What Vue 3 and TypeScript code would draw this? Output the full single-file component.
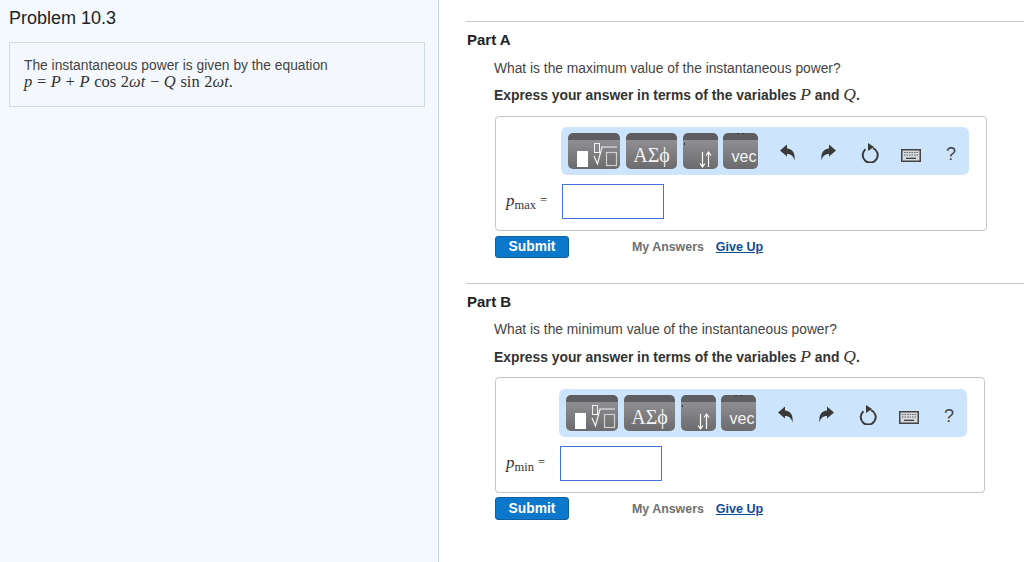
<script setup lang="ts">
interface Part {
  name: string
  question: string
  sub: string
}
const parts: Part[] = [
  { name: 'Part A', question: 'What is the maximum value of the instantaneous power?', sub: 'max' },
  { name: 'Part B', question: 'What is the minimum value of the instantaneous power?', sub: 'min' },
]
</script>

<template>
  <div class="page">
    <aside class="left">
      <h1 class="title">Problem 10.3</h1>
      <div class="intro">
        <div>The instantaneous power is given by the equation</div>
        <div class="math eq"><i>p</i> = <i>P</i> + <i>P</i> cos 2<i>ωt</i> − <i>Q</i> sin 2<i>ωt</i>.</div>
      </div>
    </aside>
    <main class="right">
      <section v-for="(p, idx) in parts" :key="p.name" class="part" :class="{ second: idx === 1 }">
        <h2 class="part-name">{{ p.name }}</h2>
        <div class="body">
          <p class="question">{{ p.question }}</p>
          <p class="express">Express your answer in terms of the variables <i class="math big">P</i> and <i class="math big">Q</i>.</p>
          <div class="box">
            <div class="toolbar">
              <div class="tool t1">
                <svg width="52" height="29" viewBox="0 0 52 29">
                  <rect x="9" y="11" width="11" height="16" fill="#fff" />
                  <rect x="26.500" y="3.500" width="5" height="9" fill="none" stroke="#f0f0f0" />
                  <path d="M26 16l3.500 8 4.500-17h15" fill="none" stroke="#f4f4f4" stroke-width="1.200" />
                  <rect x="38.500" y="12.500" width="10" height="13" fill="none" stroke="#d0d0d0" stroke-width="1.200" />
                </svg>
              </div>
              <div class="tool t2"><span class="greek">ΑΣϕ</span></div>
              <div class="tool t3">
                <svg width="35" height="29" viewBox="0 0 35 29">
                  <path d="M19.500 12v15M17 23.500l2.500 3.500 2.500-3.500M25.500 27V12M23 15.500l2.500-3.500 2.500 3.500" fill="none" stroke="#fff" stroke-width="1.200" />
                </svg>
              </div>
              <div class="tool t4"><span class="vec">vec</span></div>
              <div class="actions">
                <svg class="a1" width="15" height="17" viewBox="0 0 15 17">
                  <path d="M0 6.500L7 .5v4c5 .2 8.500 4 7.500 12-1-4-3-6.500-7.500-6.500v2.500z" fill="#3a3a3a" />
                </svg>
                <svg class="a2" width="15" height="17" viewBox="0 0 15 17">
                  <path d="M15 6.500L8 .5v4c-5 .2-8.500 4-7.500 12 1-4 3-6.500 7.500-6.500v2.500z" fill="#3a3a3a" />
                </svg>
                <svg class="a3" width="18" height="20" viewBox="0 0 18 20">
                  <path d="M4.500 6.200A7.500 7.500 0 1 0 12 5.100" fill="none" stroke="#3a3a3a" stroke-width="2" />
                  <path d="M7 0l6 4-6 4z" fill="#3a3a3a" />
                </svg>
                <svg class="a4" width="20" height="13" viewBox="0 0 20 13">
                  <rect x=".75" y=".75" width="18.500" height="11.500" fill="#d6d8dc" stroke="#444" stroke-width="1.500" />
                  <path d="M3 3.500h14M3 6h14" stroke="#666" stroke-dasharray="1.500 1" />
                  <path d="M5 9.300h10" stroke="#333" stroke-width="1.200" />
                </svg>
                <span class="help">?</span>
              </div>
            </div>
            <div class="answer-row">
              <span class="label math"><i>p</i><sub>{{ p.sub }}</sub><span class="equals">=</span></span>
              <input class="answer" type="text" />
            </div>
          </div>
          <div class="controls">
            <button class="submit" type="button">Submit</button>
            <span class="my">My Answers</span>
            <a class="give" href="#">Give Up</a>
          </div>
        </div>
      </section>
    </main>
  </div>
</template>

<style>
html, body { margin: 0; background: #fff; overflow: hidden; }
</style>

<style scoped>
.page {
  display: flex;
  width: 1024px;
  height: 562px;
  overflow: hidden;
  font-family: "Liberation Sans", Arial, sans-serif;
  color: #333;
}
.left {
  box-sizing: border-box;
  width: 439px;
  height: 562px;
  padding: 9px 13px 0 9px;
  background: #f4f8ff;
  border-right: 1px solid #c8d8e6;
}
.title {
  margin: 0 0 14px;
  font-size: 18px;
  line-height: 19px;
  font-weight: 400;
  color: #222;
}
.intro {
  box-sizing: border-box;
  height: 65px;
  padding: 15px 14px 0;
  background: #f4f8fd;
  border: 1px solid #cfdcea;
  font-size: 13.800px;
  line-height: 16px;
  color: #444;
}
.math { font-family: "Liberation Serif", "Times New Roman", serif; }
.eq { margin-top: -1px; font-size: 16.500px; line-height: 17px; color: #333; word-spacing: .5px; }
.right {
  flex: 1;
  min-width: 0;
  padding: 21px 0 0 27px;
}
.part {
  border-top: 1px solid #c8c8c8;
  height: 262px;
  box-sizing: border-box;
}
.part-name {
  margin: 9px 0 0;
  padding-left: 1px;
  font-size: 15px;
  line-height: 18px;
  font-weight: 700;
  color: #222;
}
.body {
  padding-left: 28px;
}
.question {
  margin: 12px 0 0;
  font-size: 13.800px;
  line-height: 16px;
  color: #444;
}
.second .question { margin-top: 11px; }
.express {
  margin: 10px 0 0;
  font-size: 13.850px;
  line-height: 16px;
  font-weight: 700;
  color: #333;
}
.second .express { margin-top: 11px; }
.big { font-size: 17.500px; font-weight: 400; line-height: 14px; }
.box {
  box-sizing: border-box;
  width: 492px;
  height: 115px;
  margin: 13px 0 0 1px;
  padding: 10px 0 0 65px;
  background: #fff;
  border: 1px solid #c4c4c4;
  border-radius: 4px;
}
.second .box { margin-top: 12px; height: 116px; width: 490px; padding-left: 63px; }
.second .toolbar { margin-top: 1px; }
.toolbar {
  display: flex;
  align-items: center;
  box-sizing: border-box;
  width: 408px;
  height: 48px;
  padding-left: 7px;
  gap: 6px;
  background: #cde4fd;
  border-radius: 6px;
}
.tool {
  position: relative;
  display: flex;
  align-items: flex-end;
  justify-content: center;
  box-sizing: border-box;
  height: 36px;
  border-radius: 5px;
  border-top: 7px solid #5e5d5f;
  background: linear-gradient(#908e92, #6b6a6c);
  color: #fff;
}
.tool svg { display: block; }
.t1 { width: 52px; }
.t2 { width: 51px; }
.t3 { width: 35px; }
.t3::before {
  content: "";
  position: absolute;
  left: 1px;
  top: 3px;
  width: 1px;
  height: 2px;
  background: #333;
}
.t4 { width: 35px; margin-left: -1px; }
.t4::before {
  content: "";
  position: absolute;
  left: 14px;
  top: -7px;
  width: 2px;
  height: 1px;
  background: #333;
  box-shadow: 5px 0 #333;
}
.greek {
  font-family: "Liberation Serif", serif;
  font-size: 20px;
  line-height: 28px;
  color: #f4f4f4;
}
.vec { font-size: 16px; line-height: 24px; padding-left: 7px; color: #f4f4f4; white-space: nowrap; }
.actions {
  display: flex;
  align-items: center;
  flex: 1;
  height: 100%;
  padding-left: 16px;
  box-sizing: border-box;
}
.actions svg { flex: none; }
.a1 { margin-top: 3px; }
.a2 { margin-left: 26px; margin-top: 3px; }
.a3 { margin-left: 25px; margin-top: 4px; }
.a4 { margin-left: 22px; margin-top: 9px; }
.help { margin-left: 25px; font-size: 18px; color: #444; margin-top: 7px; }
.answer-row {
  display: flex;
  align-items: center;
  margin-top: 9px;
  margin-left: -56px;
}
.label {
  box-sizing: border-box;
  width: 57px;
  padding-left: 1px;
  font-size: 15px;
  color: #333;
  line-height: 35px;
  white-space: nowrap;
  margin-top: -1px;
}
.second .label { padding-left: 3px; }
.label i { font-size: 17px; }
.label sub { font-size: 12.500px; vertical-align: -3px; line-height: 0; }
.equals { font-size: 12.500px; margin-left: 4px; vertical-align: 2px; }
.answer {
  box-sizing: border-box;
  width: 102px;
  height: 35px;
  padding: 0;
  border: 1px solid #3f74d4;
  background: #fff;
  outline: none;
}
.controls {
  display: flex;
  align-items: center;
  margin: 5px 0 0 1px;
}
.second .controls { margin-top: 4px; }
.submit {
  box-sizing: border-box;
  width: 74px;
  height: 22px;
  padding: 0;
  background: #0c78cc;
  border: 1px solid #12609f;
  border-radius: 3px;
  color: #fff;
  font: 700 13.800px/20px "Liberation Sans", Arial, sans-serif;
}
.second .submit { height: 23px; }
.my {
  margin-left: 63px;
  font-size: 12.400px;
  font-weight: 700;
  color: #707070;
}
.give {
  margin-left: 12px;
  font-size: 12.500px;
  font-weight: 700;
  color: #0b4b9b;
  text-decoration: underline;
}
</style>
